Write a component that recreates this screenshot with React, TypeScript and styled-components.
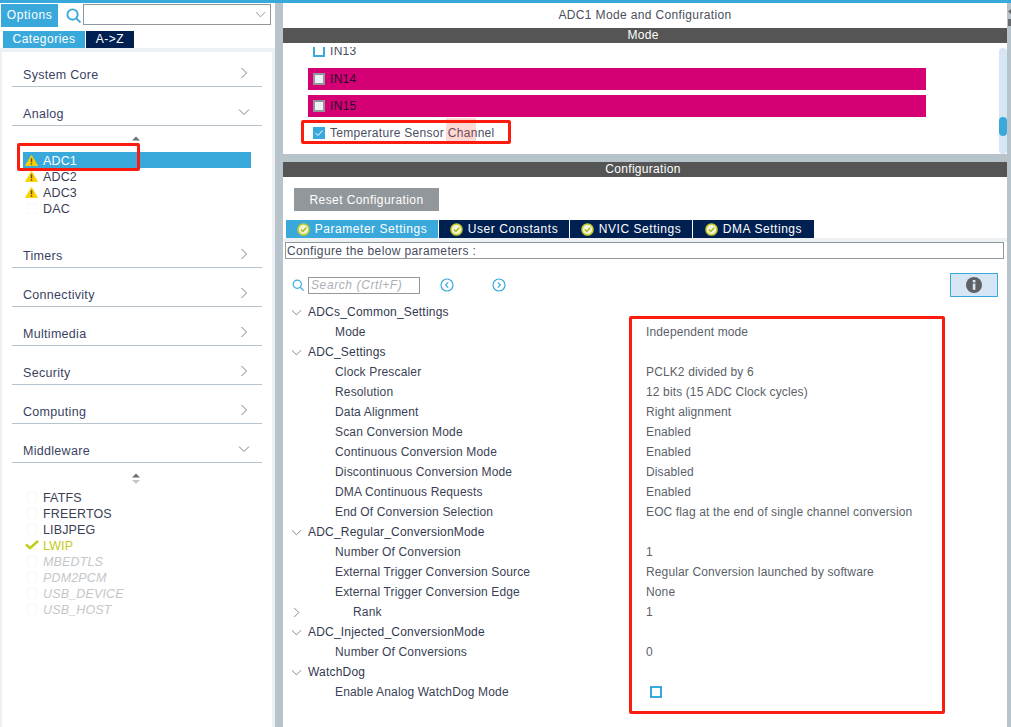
import React from "react";
import styled, { createGlobalStyle } from "styled-components";

const BLUE = "#39a9dc";
const NAVY = "#002052";
const INK = "#3b3f55";
const SHELL = "#b8c4cb";

const GlobalStyle = createGlobalStyle`
  html, body {
    margin: 0;
    padding: 0;
    background: ${SHELL};
  }
  * {
    box-sizing: border-box;
  }
`;

const categoriesAfterAnalog = ["Timers", "Connectivity", "Multimedia", "Security", "Computing"];
const analogItems = ["ADC1", "ADC2", "ADC3", "DAC"];
const middlewareItems = [
  { name: "FATFS", state: "plain" },
  { name: "FREERTOS", state: "plain" },
  { name: "LIBJPEG", state: "plain" },
  { name: "LWIP", state: "ok" },
  { name: "MBEDTLS", state: "off" },
  { name: "PDM2PCM", state: "off" },
  { name: "USB_DEVICE", state: "off" },
  { name: "USB_HOST", state: "off" },
] as const;

type Param = { name: string; value?: string; level: 0 | 1 | 2; arrow?: "open" | "closed"; box?: boolean };

const params: Param[] = [
  { name: "ADCs_Common_Settings", level: 0, arrow: "open" },
  { name: "Mode", value: "Independent mode", level: 1 },
  { name: "ADC_Settings", level: 0, arrow: "open" },
  { name: "Clock Prescaler", value: "PCLK2 divided by 6", level: 1 },
  { name: "Resolution", value: "12 bits (15 ADC Clock cycles)", level: 1 },
  { name: "Data Alignment", value: "Right alignment", level: 1 },
  { name: "Scan Conversion Mode", value: "Enabled", level: 1 },
  { name: "Continuous Conversion Mode", value: "Enabled", level: 1 },
  { name: "Discontinuous Conversion Mode", value: "Disabled", level: 1 },
  { name: "DMA Continuous Requests", value: "Enabled", level: 1 },
  { name: "End Of Conversion Selection", value: "EOC flag at the end of single channel conversion", level: 1 },
  { name: "ADC_Regular_ConversionMode", level: 0, arrow: "open" },
  { name: "Number Of Conversion", value: "1", level: 1 },
  { name: "External Trigger Conversion Source", value: "Regular Conversion launched by software", level: 1 },
  { name: "External Trigger Conversion Edge", value: "None", level: 1 },
  { name: "Rank", value: "1", level: 2, arrow: "closed" },
  { name: "ADC_Injected_ConversionMode", level: 0, arrow: "open" },
  { name: "Number Of Conversions", value: "0", level: 1 },
  { name: "WatchDog", level: 0, arrow: "open" },
  { name: "Enable Analog WatchDog Mode", level: 1, box: true },
];

const tabs = [
  { label: "Parameter Settings", width: 152, active: true },
  { label: "User Constants", width: 130, active: false },
  { label: "NVIC Settings", width: 122, active: false },
  { label: "DMA Settings", width: 121, active: false },
];

const Chevron: React.FC<{ open?: boolean; size?: number; color?: string }> = ({ open, size = 12, color = "#7b7f85" }) => (
  <svg width={size} height={size} viewBox="0 0 12 12" fill="none" stroke={color} strokeWidth="1">
    {open ? <path d="M1 3.5 L6 8.5 L11 3.5" /> : <path d="M3.5 1 L8.5 6 L3.5 11" />}
  </svg>
);

const Warning: React.FC = () => (
  <svg width="13" height="11" viewBox="0 0 14 12">
    <path d="M7 0.5 L13.5 11.5 L0.5 11.5 Z" fill="#fdd000" stroke="#fdd000" strokeLinejoin="round" />
    <rect x="6.2" y="3.5" width="1.6" height="4.5" fill="#5a5020" />
    <rect x="6.2" y="9" width="1.6" height="1.6" fill="#5a5020" />
  </svg>
);

const TabCheck: React.FC = () => (
  <svg width="13" height="13" viewBox="0 0 13 13">
    <circle cx="6.5" cy="6.5" r="5.5" fill="#f2f4d8" stroke="#c3cc2a" strokeWidth="1.6" />
    <path d="M3.8 6.6 L5.8 8.5 L9.2 4.8" fill="none" stroke="#a9b31c" strokeWidth="1.4" />
  </svg>
);

const SearchIcon: React.FC<{ size: number; stroke?: number }> = ({ size, stroke = 2 }) => (
  <svg width={size} height={size} viewBox="0 0 16 16" fill="none" stroke={BLUE} strokeWidth={stroke}>
    <circle cx="7" cy="7" r="5.5" />
    <path d="M11 11 L15.5 15.5" />
  </svg>
);

const SortMark: React.FC = () => (
  <svg width="10" height="12" viewBox="0 0 10 12">
    <path d="M5 0.5 L9 4.5 L1 4.5 Z" fill="#6d7074" />
    <path d="M1 7 L9 7 L5 11 Z" fill="#c3c6c9" />
  </svg>
);

const NavCircle: React.FC<{ back?: boolean }> = ({ back }) => (
  <svg width="14" height="14" viewBox="0 0 14 14" fill="none" stroke={BLUE}>
    <circle cx="7" cy="7" r="6" strokeWidth="1.2" />
    <path d={back ? "M8.2 4.4 L5.6 7 L8.2 9.6" : "M5.8 4.4 L8.4 7 L5.8 9.6"} strokeWidth="1.2" />
  </svg>
);

const InfoIcon: React.FC = () => (
  <svg width="16" height="16" viewBox="0 0 16 16">
    <circle cx="8" cy="8" r="8" fill="#5f6265" />
    <rect x="6.8" y="6.6" width="2.6" height="6.2" fill="#d6e6f4" />
    <rect x="6.8" y="3" width="2.6" height="2.4" fill="#d6e6f4" />
  </svg>
);

const App: React.FC = () => {
  return (
    <Page>
      <GlobalStyle />
      <TopStrip />
      <Columns>
        <LeftPane>
          <SearchRow>
            <OptionsButton>Options</OptionsButton>
            <SearchGlyph>
              <SearchIcon size={15} />
            </SearchGlyph>
            <ComboBox>
              <Chevron open size={11} color="#8a8f94" />
            </ComboBox>
          </SearchRow>
          <ModeTabs>
            <ModeTab $active $width={82}>Categories</ModeTab>
            <ModeTab $width={48}>A-&gt;Z</ModeTab>
          </ModeTabs>
          <CategoryPanel>
            <CategoryHead>
              <span>System Core</span>
              <Chevron />
            </CategoryHead>
            <CategoryHead>
              <span>Analog</span>
              <Chevron open />
            </CategoryHead>
            <SubList $bottom={13}>
              <SortSlot>
                <SortMark />
              </SortSlot>
              {analogItems.map((name) => (
                <SubItem key={name} $selected={name === "ADC1"}>
                  <StatusSlot>{name !== "DAC" ? <Warning /> : <FaintBox />}</StatusSlot>
                  {name}
                </SubItem>
              ))}
            </SubList>
            {categoriesAfterAnalog.map((name) => (
              <CategoryHead key={name}>
                <span>{name}</span>
                <Chevron />
              </CategoryHead>
            ))}
            <CategoryHead>
              <span>Middleware</span>
              <Chevron open />
            </CategoryHead>
            <SubList $bottom={0}>
              <SortSlot>
                <SortMark />
              </SortSlot>
              {middlewareItems.map((item) => (
                <SubItem key={item.name} $state={item.state}>
                  <StatusSlot>
                    {item.state === "ok" ? (
                      <svg width="14" height="10" viewBox="0 0 14 10" fill="none" stroke="#bfcc12" strokeWidth="2.4">
                        <path d="M1 4.5 L5 8.2 L13 1" />
                      </svg>
                    ) : (
                      <FaintBox />
                    )}
                  </StatusSlot>
                  {item.name}
                </SubItem>
              ))}
            </SubList>
          </CategoryPanel>
        </LeftPane>

        <RightPane>
          <PaneTitle>ADC1 Mode and Configuration</PaneTitle>
          <SectionBar>Mode</SectionBar>
          <ModePanel>
            <ChannelViewport>
              <Channel $tone="plain" $lift={-7} $after={6}>
                <CheckBox $tone="blue" />
                IN13
              </Channel>
              <Channel $tone="pinned">
                <CheckBox $tone="grey" />
                IN14
              </Channel>
              <Channel $tone="pinned">
                <CheckBox $tone="grey" />
                IN15
              </Channel>
              <Channel $tone="plain">
                <CheckBox $tone="checked">
                  <svg width="12" height="12" viewBox="0 0 12 12" fill="none" stroke="#fff" strokeWidth="1">
                    <path d="M2.5 6 L5 8.5 L9.5 3.5" />
                  </svg>
                </CheckBox>
                Temperature Sensor Channel
              </Channel>
            </ChannelViewport>
            <ScrollTrack>
              <ScrollThumb />
            </ScrollTrack>
          </ModePanel>
          <SectionGap />
          <SectionBar>Configuration</SectionBar>
          <ConfigPanel>
            <ResetButton>Reset Configuration</ResetButton>
            <TabRow>
              {tabs.map((tab) => (
                <ConfigTab key={tab.label} $active={tab.active} $width={tab.width}>
                  <TabCheck />
                  {tab.label}
                </ConfigTab>
              ))}
            </TabRow>
            <TabFloor />
            <HintBox>Configure the below parameters :</HintBox>
            <ToolRow>
              <SearchIcon size={12} stroke={1.6} />
              <ParamSearch>Search (Crtl+F)</ParamSearch>
              <NavSlot>
                <NavCircle back />
              </NavSlot>
              <NavSlot>
                <NavCircle />
              </NavSlot>
              <InfoButton>
                <InfoIcon />
              </InfoButton>
            </ToolRow>
            <ParamTree>
              {params.map((p) => (
                <ParamRow key={p.name}>
                  <ArrowSlot>{p.arrow && <Chevron open={p.arrow === "open"} size={11} />}</ArrowSlot>
                  <ParamName $level={p.level}>{p.name}</ParamName>
                  <ParamValue>{p.box ? <ValueBox /> : p.value}</ParamValue>
                </ParamRow>
              ))}
            </ParamTree>
          </ConfigPanel>
        </RightPane>
      </Columns>

      <SashGrip>
        <svg width="3" height="18" viewBox="0 0 3 18" fill="#66696c">
          <path d="M3 0 L0 2.5 L3 5 Z" />
          <path d="M0 10 L3 10 L3 17 L0 17 Z" />
        </svg>
      </SashGrip>
      <RedFrame $x={17} $y={143} $w={123} $h={28} />
      <ClickSpot />
      <RedFrame $x={301} $y={120} $w={210} $h={24} />
      <RedFrame $x={629} $y={316} $w={316} $h={398} />
    </Page>
  );
};

export default App;

const Page = styled.div`
  position: relative;
  width: 1011px;
  height: 727px;
  overflow: hidden;
  background: ${SHELL};
  font-family: "Liberation Sans", Arial, sans-serif;
  font-size: 12px;
  letter-spacing: 0.3px;
  color: ${INK};
`;

const TopStrip = styled.div`
  height: 3px;
  background: ${BLUE};
`;

const Columns = styled.div`
  display: flex;
  height: 724px;
`;

const LeftPane = styled.div`
  width: 275px;
  margin-right: 8px;
  background: #eef1f4;
`;

const SearchRow = styled.div`
  display: flex;
  align-items: flex-start;
  height: 28px;
  padding: 1px 0 0 1px;
  background: #fff;
`;

const OptionsButton = styled.div`
  width: 57px;
  height: 23px;
  line-height: 23px;
  text-align: center;
  background: ${BLUE};
  color: #fff;
  font-size: 12px;
  letter-spacing: 0.6px;
`;

const SearchGlyph = styled.div`
  width: 25px;
  height: 23px;
  padding: 4px 0 0 8px;
`;

const ComboBox = styled.div`
  display: flex;
  align-items: center;
  justify-content: flex-end;
  width: 188px;
  height: 21px;
  padding-right: 4px;
  background: #fff;
  border: 1px solid #92979c;
`;

const ModeTabs = styled.div`
  display: flex;
  gap: 1px;
  height: 17px;
  padding-left: 3px;
  background: #fff;
`;

const ModeTab = styled.div<{ $active?: boolean; $width: number }>`
  width: ${(p) => p.$width}px;
  line-height: 17px;
  text-align: center;
  color: #fff;
  background: ${(p) => (p.$active ? BLUE : NAVY)};
  letter-spacing: 0.5px;
`;

const CategoryPanel = styled.div`
  width: 270px;
  height: 675px;
  margin: 4px 0 0 2px;
  padding: 9px 10px 0;
  background: #fff;
`;

const CategoryHead = styled.div`
  display: flex;
  align-items: center;
  justify-content: space-between;
  height: 26px;
  margin-top: 13px;
  padding: 0 12px 0 11px;
  border-bottom: 1px solid #b8c4cb;
  font-size: 12.5px;
  color: #3a3f62;

  &:first-child {
    margin-top: 0;
  }

  span {
    padding-top: 2px;
  }

  svg {
    margin-bottom: 2px;
  }
`;

const SubList = styled.div<{ $bottom: number }>`
  padding: 10px 0 ${(p) => p.$bottom}px 11px;
`;

const SortSlot = styled.div`
  display: flex;
  justify-content: center;
  height: 16px;
  padding-right: 14px;
`;

const SubItem = styled.div<{ $selected?: boolean; $state?: string }>`
  display: flex;
  align-items: center;
  width: 228px;
  height: 16px;
  padding-top: 1px;
  font-size: 12.5px;
  letter-spacing: 0.15px;
  background: ${(p) => (p.$selected ? BLUE : "transparent")};
  color: ${(p) =>
    p.$selected ? "#fff" : p.$state === "ok" ? "#bfcc12" : p.$state === "off" ? "#c3c7cb" : INK};
  font-style: ${(p) => (p.$state === "off" ? "italic" : "normal")};
`;

const StatusSlot = styled.span`
  display: flex;
  align-items: center;
  width: 20px;
  margin-top: -1px;
  padding-left: 2px;
`;

const FaintBox = styled.span`
  width: 10px;
  height: 11px;
  margin-left: 2px;
  border: 1px solid #f6f7f8;
`;

const RightPane = styled.div`
  width: 724px;
`;

const PaneTitle = styled.div`
  height: 25px;
  line-height: 24px;
  text-align: center;
  background: #fff;
  color: #4b4f5a;
  letter-spacing: 0.36px;
`;

const SectionBar = styled.div`
  height: 15px;
  line-height: 15px;
  padding-right: 4px;
  text-align: center;
  background: #545554;
  color: #fff;
`;

const SectionGap = styled.div`
  height: 8px;
`;

const ModePanel = styled.div`
  position: relative;
  height: 111px;
  padding: 4px 0 0 25px;
  background: #fff;
`;

const ChannelViewport = styled.div`
  height: 107px;
  overflow: hidden;
`;

const Channel = styled.div<{ $tone: "plain" | "pinned"; $lift?: number; $after?: number }>`
  display: flex;
  align-items: center;
  gap: 5px;
  width: 618px;
  height: 22px;
  margin-top: ${(p) => p.$lift ?? 0}px;
  margin-bottom: ${(p) => p.$after ?? 5}px;
  padding-left: 5px;
  background: ${(p) => (p.$tone === "pinned" ? "#d50074" : "transparent")};
  color: ${(p) => (p.$tone === "pinned" ? "#2a0a2a" : "#4b4f62")};
`;

const CheckBox = styled.span<{ $tone: "blue" | "grey" | "checked" }>`
  display: flex;
  flex: none;
  width: 12px;
  height: 12px;
  border: 2px solid ${(p) => (p.$tone === "grey" ? "#92979c" : BLUE)};
  background: ${(p) => (p.$tone === "grey" ? "#eef1f4" : p.$tone === "checked" ? BLUE : "#fff")};

  svg {
    margin: -2px;
    flex: none;
  }
`;

const ScrollTrack = styled.div`
  position: absolute;
  top: 5px;
  right: 0;
  bottom: 0;
  width: 8px;
  border-radius: 4px;
  background: #d6e6f4;
`;

const ScrollThumb = styled.div`
  width: 8px;
  height: 19px;
  margin-top: 69px;
  border-radius: 4px;
  background: ${BLUE};
`;

const ConfigPanel = styled.div`
  height: 550px;
  padding-top: 11px;
  background: #fff;
`;

const ResetButton = styled.div`
  width: 145px;
  height: 23px;
  margin-left: 11px;
  line-height: 24px;
  text-align: center;
  background: #92979c;
  color: #fff;
  letter-spacing: 0.42px;
`;

const TabRow = styled.div`
  display: flex;
  gap: 1px;
  height: 18px;
  margin: 9px 0 0 3px;
`;

const ConfigTab = styled.div<{ $active: boolean; $width: number }>`
  display: flex;
  align-items: center;
  justify-content: center;
  gap: 5px;
  width: ${(p) => p.$width}px;
  color: #fff;
  background: ${(p) => (p.$active ? BLUE : NAVY)};
  letter-spacing: 0.55px;
`;

const TabFloor = styled.div`
  height: 4px;
  background: #eef1f4;
`;

const HintBox = styled.div`
  width: 719px;
  height: 17px;
  margin-left: 2px;
  padding-left: 1px;
  line-height: 17px;
  border: 1px solid #92979c;
  letter-spacing: 0.37px;
  color: #474b60;
`;

const ToolRow = styled.div`
  display: flex;
  align-items: center;
  height: 24px;
  margin-top: 14px;
  padding-left: 9px;
`;

const ParamSearch = styled.div`
  width: 112px;
  height: 17px;
  margin: 0 1px 0 4px;
  padding-left: 2px;
  line-height: 15px;
  border: 1px solid #92979c;
  font-style: italic;
  letter-spacing: 0.6px;
  color: #aab0b5;
`;

const NavSlot = styled.div`
  display: flex;
  justify-content: center;
  width: 52px;
`;

const InfoButton = styled.div`
  display: flex;
  align-items: center;
  justify-content: center;
  width: 48px;
  height: 24px;
  margin-left: auto;
  margin-right: 9px;
  background: #d6e6f4;
  border: 1px solid ${BLUE};
`;

const ParamTree = styled.div`
  margin-top: 5px;
`;

const ParamRow = styled.div`
  display: grid;
  grid-template-columns: 25px 338px 1fr;
  align-items: center;
  height: 20px;
`;

const ArrowSlot = styled.span`
  display: flex;
  padding-left: 8px;
`;

const ParamName = styled.span<{ $level: number }>`
  padding-left: ${(p) => [0, 27, 45][p.$level]}px;
  color: ${(p) => (p.$level === 0 ? "#33384f" : INK)};
  letter-spacing: ${(p) => (p.$level === 0 ? 0.2 : 0.15)}px;
`;

const ParamValue = styled.span`
  display: flex;
  letter-spacing: 0.13px;
  color: #5b5f6a;
`;

const ValueBox = styled.span`
  width: 12px;
  height: 12px;
  margin-left: 4px;
  border: 2px solid ${BLUE};
`;

const SashGrip = styled.div`
  position: absolute;
  top: 9px;
  right: 0;
  width: 3px;
  line-height: 0;
`;

const RedFrame = styled.div<{ $x: number; $y: number; $w: number; $h: number }>`
  position: absolute;
  left: ${(p) => p.$x}px;
  top: ${(p) => p.$y}px;
  width: ${(p) => p.$w}px;
  height: ${(p) => p.$h}px;
  border: 3px solid #fb1c0f;
  border-radius: 2px;
`;

const ClickSpot = styled.div`
  position: absolute;
  left: 446px;
  top: 118px;
  width: 30px;
  height: 26px;
  background: rgba(251, 60, 40, 0.2);
`;
